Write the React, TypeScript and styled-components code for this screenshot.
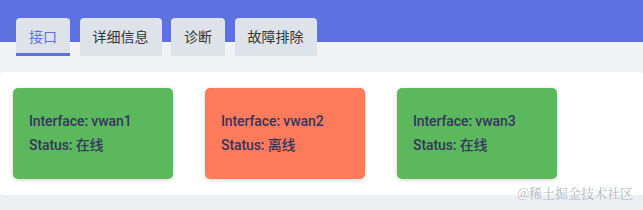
import React from "react";
import styled, { createGlobalStyle } from "styled-components";

const Global = createGlobalStyle`
  html, body { margin: 0; padding: 0; }
  body {
    background: #f0f1f4;
    font-family: "Noto Sans", "Noto Sans CJK SC", sans-serif;
    width: 643px;
    height: 210px;
    overflow: hidden;
  }
`;

const Page = styled.div`
  position: relative;
  width: 643px;
  height: 210px;
  background: linear-gradient(#f2f3f5, #eeeff2);
`;

const Header = styled.div`
  height: 42px;
  background: #5d71e1;
  padding-left: 16px;
  display: flex;
  align-items: flex-start;
`;

const TabList = styled.div`
  display: flex;
  gap: 9.5px;
  margin-top: 18px;
`;

const Tab = styled.div<{ $active?: boolean }>`
  height: 38px;
  box-sizing: border-box;
  padding: 0 13px;
  display: flex;
  align-items: center;
  justify-content: center;
  background: #dee3e9;
  border-radius: 4px 4px 0 0;
  font-size: 14px;
  font-family: "Noto Sans CJK SC", sans-serif;
  color: ${(p) => (p.$active ? "#5d71e1" : "#333333")};
  border-bottom: ${(p) => (p.$active ? "3px solid #5d71e1" : "none")};
  padding-bottom: ${(p) => (p.$active ? "0" : "3px")};
`;

const Panel = styled.div`
  margin-top: 30px;
  background: #ffffff;
  height: 123px;
  border-radius: 3px;
  padding: 16px 13px;
  box-sizing: border-box;
  display: flex;
  gap: 32px;
`;

const Card = styled.div<{ $color: string }>`
  width: 160px;
  height: 91px;
  box-sizing: border-box;
  background: ${(p) => p.$color};
  border-radius: 5px;
  box-shadow: 0 1px 4px rgba(0, 0, 0, 0.18);
  padding: 25px 16px 0;
  display: flex;
  flex-direction: column;
  gap: 7px;
  color: #38355f;
  font-size: 14px;
`;

const Line = styled.div`
  line-height: 17px;
  font-family: Roboto, "Noto Sans CJK SC", sans-serif;
  font-weight: 500;
  letter-spacing: -0.1px;
`;

const Watermark = styled.div`
  position: absolute;
  right: 10px;
  bottom: 8px;
  font-family: "Noto Serif CJK SC", "Noto Sans CJK SC", serif;
  font-size: 13px;
  color: #b3b6bd;
`;

const tabs = ["接口", "详细信息", "诊断", "故障排除"];
const cards = [
  { name: "vwan1", status: "在线", color: "#5cb85c" },
  { name: "vwan2", status: "离线", color: "#ff7b5c" },
  { name: "vwan3", status: "在线", color: "#5cb85c" },
];

export default function App() {
  return (
    <Page>
      <Global />
      <Header>
        <TabList>
          {tabs.map((t, i) => (
            <Tab key={t} $active={i === 0}>
              {t}
            </Tab>
          ))}
        </TabList>
      </Header>
      <Panel>
        {cards.map((c) => (
          <Card key={c.name} $color={c.color}>
            <Line>Interface: {c.name}</Line>
            <Line>Status: {c.status}</Line>
          </Card>
        ))}
      </Panel>
      <Watermark>@稀土掘金技术社区</Watermark>
    </Page>
  );
}
